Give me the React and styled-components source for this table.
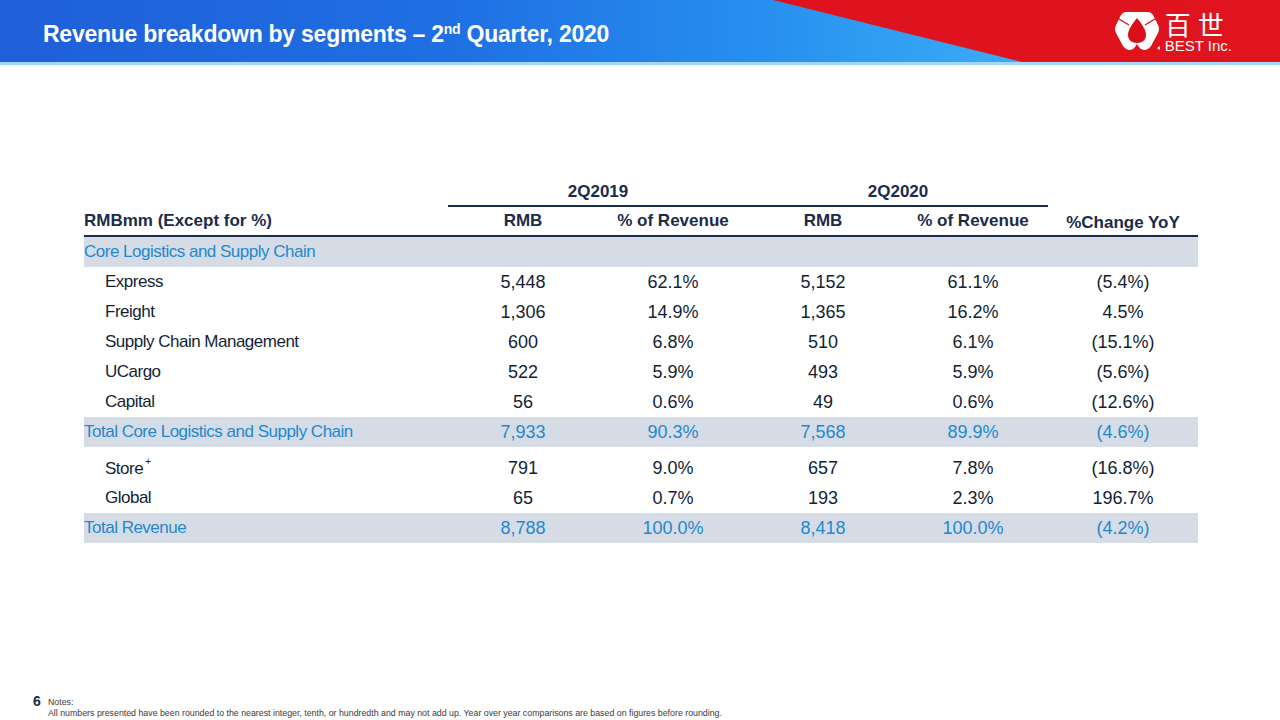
import styled, { createGlobalStyle } from "styled-components"

const GlobalStyle = createGlobalStyle`
    html, body {
        margin: 0;
        padding: 0;
        background: #ffffff;
    }
`

const SANS = `"Liberation Sans", Arial, sans-serif`
const NAVY = "#1b2b4a"
const INK = "#131f36"
const BLUE = "#1f88cf"
const BAND = "#d6dce6"

const Slide = styled.div`
    width: 1280px;
    height: 720px;
    display: flex;
    flex-direction: column;
    overflow: hidden;
    background: #fff;
`

const Header = styled.header`
    position: relative;
    height: 65px;
    flex-shrink: 0;
    display: flex;
    align-items: center;
    padding: 6px 48px 0 43px;
    box-sizing: border-box;
    background: linear-gradient(90deg, #1f5fd9 0%, #1f6fe3 35%, #2790ef 60%, #3cadf7 80%);
    border-bottom: 3px solid #a3d6f8;
    overflow: hidden;
`

const RedWedge = styled.div`
    position: absolute;
    inset: 0;
    background: linear-gradient(90deg, #d9101c, #e0141e);
    clip-path: polygon(773px 0, 100% 0, 100% 100%, 1022px 100%);
`

const Title = styled.h1`
    position: relative;
    margin: 0;
    font-family: ${SANS};
    font-weight: 700;
    font-size: 23px;
    letter-spacing: -0.25px;
    color: #fff;
    white-space: nowrap;

    sup {
        font-size: 14px;
        vertical-align: 8px;
        line-height: 0;
    }
`

const Logo = styled.div`
    position: relative;
    margin-left: auto;
    margin-top: -6px;
    display: flex;
    align-items: center;
    gap: 5px;
`

const LogoWords = styled.div`
    display: flex;
    flex-direction: column;
    align-items: flex-start;
    color: #fff;
`

const LogoCn = styled.span`
    font-family: "Noto Sans CJK SC", sans-serif;
    font-size: 26px;
    line-height: 28px;
    letter-spacing: 7px;
    margin-right: -7px;
`

const LogoEn = styled.span`
    font-family: ${SANS};
    font-size: 15px;
    line-height: 15px;
`

const Main = styled.main`
    flex: 1;
    padding: 111px 0 0 84px;
`

const COLS = "364px repeat(5, 150px)"

const HeadGrid = styled.div`
    display: grid;
    grid-template-columns: ${COLS};
    width: 1114px;
    font-family: ${SANS};
    font-weight: 700;
    font-size: 17px;
    color: ${NAVY};
`

const GroupHead = styled.div`
    grid-column: ${(p) => p.$col} / span 2;
    height: 31px;
    display: flex;
    align-items: center;
    justify-content: center;
    box-sizing: border-box;
    padding-top: 2px;
    border-bottom: 2px solid ${NAVY};
`

const SubHead = styled.div`
    grid-row: 2;
    height: 30px;
    display: flex;
    align-items: center;
    justify-content: ${(p) => (p.$left ? "flex-start" : "center")};
    padding-top: ${(p) => (p.$low ? "4px" : "0")};
    box-sizing: border-box;
    border-bottom: 2px solid ${NAVY};
`

const Row = styled.div`
    display: grid;
    grid-template-columns: ${COLS};
    width: 1114px;
    height: ${(p) => (p.$tall ? "36px" : "30px")};
    align-items: ${(p) => (p.$tall ? "end" : "center")};
    padding-bottom: ${(p) => (p.$tall ? "4px" : "0")};
    box-sizing: border-box;
    background: ${(p) => (p.$band ? BAND : "transparent")};
    color: ${(p) => (p.$blue ? BLUE : INK)};
`

const Label = styled.div`
    font-family: ${SANS};
    font-size: 17px;
    letter-spacing: -0.5px;
    padding-left: ${(p) => (p.$indent ? "21px" : "0")};
    white-space: nowrap;

    sup {
        font-size: 10px;
        vertical-align: 9px;
        line-height: 0;
        margin-left: 2px;
    }
`

const Num = styled.div`
    font-family: ${SANS};
    font-size: 18px;
    text-align: center;
`

const Footer = styled.footer`
    display: flex;
    align-items: flex-start;
    padding: 0 0 1px 33px;
`

const PageNo = styled.span`
    width: 15px;
    font-family: ${SANS};
    font-weight: 700;
    font-size: 14px;
    line-height: 14px;
    color: ${NAVY};
`

const Notes = styled.div`
    font-family: ${SANS};
    font-size: 8.8px;
    line-height: 11px;
    padding-top: 3px;
    color: #3a3a3a;
`

const rows = [
    { label: "Core Logistics and Supply Chain", kind: "section" },
    { label: "Express", v: ["5,448", "62.1%", "5,152", "61.1%", "(5.4%)"] },
    { label: "Freight", v: ["1,306", "14.9%", "1,365", "16.2%", "4.5%"] },
    { label: "Supply Chain Management", v: ["600", "6.8%", "510", "6.1%", "(15.1%)"] },
    { label: "UCargo", v: ["522", "5.9%", "493", "5.9%", "(5.6%)"] },
    { label: "Capital", v: ["56", "0.6%", "49", "0.6%", "(12.6%)"] },
    { label: "Total Core Logistics and Supply Chain", kind: "total", v: ["7,933", "90.3%", "7,568", "89.9%", "(4.6%)"] },
    { label: "Store", sup: "+", tall: true, v: ["791", "9.0%", "657", "7.8%", "(16.8%)"] },
    { label: "Global", v: ["65", "0.7%", "193", "2.3%", "196.7%"] },
    { label: "Total Revenue", kind: "total", v: ["8,788", "100.0%", "8,418", "100.0%", "(4.2%)"] },
]

// BEST Inc. mark: white rounded frame, red drop inside
const BestMark = () => (
    <svg width="46" height="42" viewBox="0 0 46 42">
        <path
            d="M12 2 H34 Q37 2 39 5 L44 15 Q46 19 44 23 L37 36 Q34 40 30 40 Q27 40 25 37 L23 34 L21 37 Q19 40 16 40 Q12 40 9 36 L2 23 Q0 19 2 15 L7 5 Q9 2 12 2 Z"
            fill="#fff"
        />
        <path
            d="M23 8 C28 14 32 20 32 25 C32 30 28 33 23 33 C18 33 14 30 14 25 C14 20 18 14 23 8 Z"
            fill="#d9101c"
        />
        <path d="M5 9 L15 15" stroke="#d9101c" strokeWidth="1.4" />
        <path d="M41 9 L31 15" stroke="#d9101c" strokeWidth="1.4" />
        <circle cx="45" cy="38" r="1.5" fill="#fff" />
    </svg>
)

export default function App() {
    return (
        <Slide>
            <GlobalStyle />
            <Header>
                <RedWedge />
                <Title>
                    Revenue breakdown by segments – 2<sup>nd</sup> Quarter, 2020
                </Title>
                <Logo>
                    <BestMark />
                    <LogoWords>
                        <LogoCn>百世</LogoCn>
                        <LogoEn>BEST Inc.</LogoEn>
                    </LogoWords>
                </Logo>
            </Header>

            <Main>
                <HeadGrid>
                    <GroupHead $col={2}>2Q2019</GroupHead>
                    <GroupHead $col={4}>2Q2020</GroupHead>
                    <SubHead $left>RMBmm (Except for %)</SubHead>
                    <SubHead>RMB</SubHead>
                    <SubHead>% of Revenue</SubHead>
                    <SubHead>RMB</SubHead>
                    <SubHead>% of Revenue</SubHead>
                    <SubHead $low>%Change YoY</SubHead>
                </HeadGrid>

                {rows.map((r) => (
                    <Row
                        key={r.label}
                        $band={r.kind === "section" || r.kind === "total"}
                        $blue={r.kind === "section" || r.kind === "total"}
                        $tall={r.tall}
                    >
                        <Label $indent={!r.kind}>
                            {r.label}
                            {r.sup && <sup>{r.sup}</sup>}
                        </Label>
                        {(r.v || []).map((val, i) => (
                            <Num key={i}>{val}</Num>
                        ))}
                    </Row>
                ))}
            </Main>

            <Footer>
                <PageNo>6</PageNo>
                <Notes>
                    Notes:
                    <br />
                    All numbers presented have been rounded to the nearest integer, tenth, or hundredth and may not add up. Year over year comparisons are based on figures before rounding.
                </Notes>
            </Footer>
        </Slide>
    )
}
